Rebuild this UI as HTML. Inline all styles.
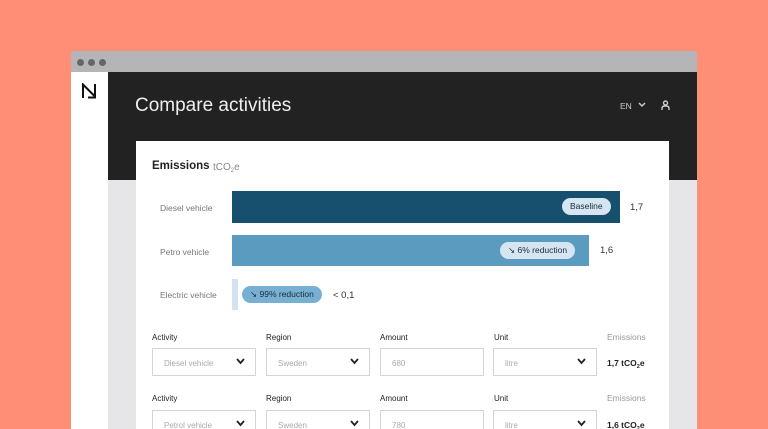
<!DOCTYPE html>
<html style="overflow:hidden;height:429px"><head><meta charset="utf-8"><style>
*{margin:0;padding:0;box-sizing:border-box}
body{width:768px;height:429px;overflow:hidden;background:#fe8f76;font-family:"Liberation Sans",sans-serif}
#w{position:relative;width:768px;height:429px;overflow:hidden}
.a{position:absolute}
.dot{width:7px;height:7px;border-radius:50%;background:#666;top:59px}
.lbl{font-size:8px;color:#222;top:333px}
.in{height:28px;border:1px solid #d4d4d4;background:#fff;font-size:8px;color:#aaa;padding:10px 0 0 11px}
.chev{position:absolute;right:10px;top:9px}
.pill{border-radius:9px;font-size:8.5px;color:#1c2a33;height:17px;line-height:17px;padding:0 8px}
sub{vertical-align:baseline;position:relative;top:2px;line-height:0}
</style></head><body><div id="w">
<div class="a" style="left:71px;top:51px;width:626px;height:21px;background:#b5b5b7"></div>
<div class="a dot" style="left:77px"></div><div class="a dot" style="left:88px"></div><div class="a dot" style="left:99px"></div>
<div class="a" style="left:71px;top:72px;width:37px;height:357px;background:#fff"></div>
<svg class="a" style="left:81px;top:83px" width="16" height="16" viewBox="0 0 16 16"><path d="M2 15V1.5L14 13.5M14 1V15M7 14.5H14V7.5" stroke="#111" stroke-width="2" fill="none"/></svg>
<div class="a" style="left:108px;top:72px;width:589px;height:108px;background:#222"></div>
<div class="a" style="left:108px;top:180px;width:589px;height:249px;background:#e6e6e8"></div>
<div class="a" style="left:135px;top:95px;font-size:19px;color:#eee">Compare activities</div>
<div class="a" style="left:620px;top:101px;font-size:8.5px;color:#ccc">EN</div>
<svg class="a" style="left:638px;top:102px" width="8" height="6"><path d="M1 1L4 4L7 1" stroke="#ccc" stroke-width="1.5" fill="none"/></svg>
<svg class="a" style="left:661px;top:100px" width="9" height="11"><circle cx="4.5" cy="3" r="2" stroke="#ccc" stroke-width="1.4" fill="none"/><path d="M1 10V8Q1 6 4.5 6Q8 6 8 8V10" stroke="#ccc" stroke-width="1.4" fill="none"/></svg>
<div class="a" style="left:136px;top:141px;width:533px;height:288px;background:#fff"></div>
<div class="a" style="left:152px;top:160px;font-size:11.5px;font-weight:bold;color:#222">Emissions</div>
<div class="a" style="left:213px;top:162px;font-size:10px;color:#888">tCO<sub style="font-size:6px">2</sub>e</div>
<div class="a" style="left:160px;top:203px;font-size:8.5px;color:#777">Diesel vehicle</div>
<div class="a" style="left:160px;top:247px;font-size:8.5px;color:#777">Petro vehicle</div>
<div class="a" style="left:160px;top:290px;font-size:8.5px;color:#777">Electric vehicle</div>
<div class="a" style="left:232px;top:191px;width:388px;height:32px;background:#17506e"></div>
<div class="a pill" style="left:562px;top:198px;background:#d5e6f2">Baseline</div>
<div class="a" style="left:630px;top:202px;font-size:9.5px;color:#333">1,7</div>
<div class="a" style="left:232px;top:235px;width:357px;height:31px;background:#5b9bbf"></div>
<div class="a pill" style="left:500px;top:242px;background:#d5e6f2">&#x2198;&#xFE0E; 6% reduction</div>
<div class="a" style="left:600px;top:245px;font-size:9.5px;color:#333">1,6</div>
<div class="a" style="left:232px;top:279px;width:6px;height:31px;background:#cfe3f2"></div>
<div class="a pill" style="left:242px;top:286px;background:#78b0d3">&#x2198;&#xFE0E; 99% reduction</div>
<div class="a" style="left:333px;top:290px;font-size:9.5px;color:#333">&lt; 0,1</div>

<div class="a lbl" style="left:152px">Activity</div><div class="a lbl" style="left:266px">Region</div><div class="a lbl" style="left:380px">Amount</div><div class="a lbl" style="left:494px">Unit</div>
<div class="a" style="left:607px;top:332px;font-size:8.5px;color:#999">Emissions</div>
<div class="a in" style="left:152px;top:348px;width:104px">Diesel vehicle<svg class="chev" width="9" height="7"><path d="M1 1L4.5 5L8 1" stroke="#222" stroke-width="1.8" fill="none"/></svg></div>
<div class="a in" style="left:266px;top:348px;width:104px">Sweden<svg class="chev" width="9" height="7"><path d="M1 1L4.5 5L8 1" stroke="#222" stroke-width="1.8" fill="none"/></svg></div>
<div class="a in" style="left:380px;top:348px;width:104px">680</div>
<div class="a in" style="left:493px;top:348px;width:104px">litre<svg class="chev" width="9" height="7"><path d="M1 1L4.5 5L8 1" stroke="#222" stroke-width="1.8" fill="none"/></svg></div>
<div class="a" style="left:607px;top:358px;font-size:8.5px;font-weight:bold;color:#222">1,7 tCO<sub style="font-size:5.5px">2</sub>e</div>

<div class="a lbl" style="left:152px;top:394px">Activity</div><div class="a lbl" style="left:266px;top:394px">Region</div><div class="a lbl" style="left:380px;top:394px">Amount</div><div class="a lbl" style="left:494px;top:394px">Unit</div>
<div class="a" style="left:607px;top:393px;font-size:8.5px;color:#999">Emissions</div>
<div class="a in" style="left:152px;top:410px;width:104px">Petrol vehicle<svg class="chev" width="9" height="7"><path d="M1 1L4.5 5L8 1" stroke="#222" stroke-width="1.8" fill="none"/></svg></div>
<div class="a in" style="left:266px;top:410px;width:104px">Sweden<svg class="chev" width="9" height="7"><path d="M1 1L4.5 5L8 1" stroke="#222" stroke-width="1.8" fill="none"/></svg></div>
<div class="a in" style="left:380px;top:410px;width:104px">780</div>
<div class="a in" style="left:493px;top:410px;width:104px">litre<svg class="chev" width="9" height="7"><path d="M1 1L4.5 5L8 1" stroke="#222" stroke-width="1.8" fill="none"/></svg></div>
<div class="a" style="left:607px;top:420px;font-size:8.5px;font-weight:bold;color:#222">1,6 tCO<sub style="font-size:5.5px">2</sub>e</div>
</div></body></html>
